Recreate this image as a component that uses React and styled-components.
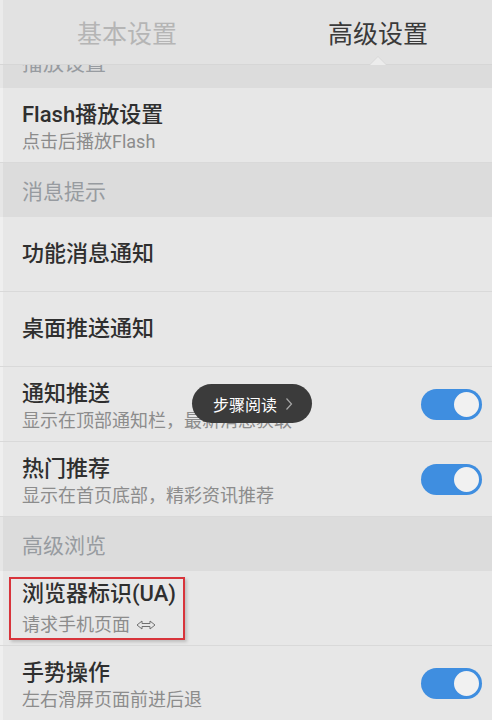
import React from 'react';
import styled, { createGlobalStyle } from 'styled-components';

const GlobalStyle = createGlobalStyle`
  html, body {
    margin: 0;
    padding: 0;
    background: #e8e8e8;
  }
  body {
    font-family: Roboto, "Noto Sans CJK SC", sans-serif;
  }
`;

const Screen = styled.div`
  position: relative;
  width: 492px;
  height: 720px;
  overflow: hidden;
  background: #e8e8e8;
  display: flex;
  flex-direction: column;
`;

const TabBar = styled.div`
  position: relative;
  z-index: 2;
  flex: none;
  height: 64px;
  display: grid;
  grid-template-columns: 254px 248px;
  background: #e2e2e2;
  border-bottom: 1px solid #d6d6d6;
  box-shadow: inset 3px 0 0 #ebebeb;
`;

const Tab = styled.div`
  position: relative;
  display: flex;
  align-items: center;
  justify-content: center;
  font-size: 25px;
  color: ${p => (p.active ? '#3a3a3a' : '#b5b5b5')};
`;

const Notch = styled.span`
  position: absolute;
  left: 50%;
  bottom: -1px;
  width: 0;
  height: 0;
  margin-left: -8px;
  border-left: 8px solid transparent;
  border-right: 8px solid transparent;
  border-bottom: 8px solid #ececec;
  filter: drop-shadow(0 -1px 0 #d8d8d8);
`;

const List = styled.div`
  flex: 1;
  overflow: hidden;
`;

const Scroller = styled.div`
  margin-top: -31px;
`;

const SectionHeader = styled.div`
  height: 54px;
  display: flex;
  align-items: center;
  padding-left: 22px;
  background: #dcdcdc;
  color: #979ba0;
  font-size: 21px;
  box-shadow: inset 3px 0 0 #e6e6e6;
`;

const Row = styled.div`
  height: 75px;
  box-sizing: border-box;
  display: flex;
  align-items: ${p => (p.sub ? 'flex-start' : 'center')};
  justify-content: space-between;
  padding: ${p => (p.sub ? '13px 10px 0 22px' : '0 10px 0 22px')};
  background: #e7e7e7;
  border-bottom: 1px solid #d9d9d9;
  box-shadow: inset 3px 0 0 #efefef;
`;

const TextBlock = styled.div`
  display: flex;
  flex-direction: column;
`;

const Title = styled.div`
  font-size: 22px;
  line-height: 28px;
  font-weight: 500;
  color: #2f2f2f;
  white-space: nowrap;
`;

const Subtitle = styled.div`
  font-size: 18px;
  line-height: 26px;
  color: #8c8c8c;
  white-space: nowrap;
  display: flex;
  align-items: center;
  gap: 6px;
`;

const Annotated = styled.div`
  display: flex;
  flex-direction: column;
  margin: 0 0 0 -13px;
  padding: 1px 7px 1px 11px;
  border: 2px solid #d8343b;
  box-shadow: 2px 2px 3px rgba(0, 0, 0, 0.18);
  ${Subtitle} {
    line-height: 24px;
    margin-top: 5px;
  }
`;

const Switch = styled.div`
  flex: none;
  align-self: center;
  width: 61px;
  height: 31px;
  border-radius: 16px;
  background: #3f8ee0;
  display: flex;
  justify-content: flex-end;
  align-items: center;
  box-sizing: border-box;
  padding-right: 1px;
  margin-top: ${p => (p.offset ? `-${p.offset}px` : '0')};
`;

const Knob = styled.div`
  width: 29px;
  height: 29px;
  border-radius: 50%;
  background: #f1f1f1;
  border: 2px solid #3f8ee0;
  box-sizing: border-box;
`;

const Toast = styled.div`
  position: absolute;
  left: 192px;
  top: 384px;
  z-index: 3;
  width: 120px;
  height: 39px;
  border-radius: 20px;
  background: #3b3b3b;
  display: flex;
  align-items: center;
  justify-content: center;
  gap: 8px;
  color: #ffffff;
  font-size: 16px;
  padding-left: 2px;
  box-sizing: border-box;
`;

const Swap = () => (
  <svg width="20" height="10" viewBox="0 0 20 10">
    <path
      d="M1 5 L6 1 L6 3.5 L14 3.5 L14 1 L19 5 L14 9 L14 6.5 L6 6.5 L6 9 Z"
      fill="none"
      stroke="#707070"
      strokeWidth="1"
      strokeLinejoin="round"
    />
  </svg>
);

const Chevron = () => (
  <svg width="8" height="14" viewBox="0 0 8 14">
    <polyline points="1.5,1.5 6.5,7 1.5,12.5" fill="none" stroke="#a8a8a8" strokeWidth="1.2" />
  </svg>
);

const Toggle = ({ offset }) => (
  <Switch offset={offset}>
    <Knob />
  </Switch>
);

const SettingRow = ({ title, sub, toggle }) => (
  <Row sub={sub}>
    <TextBlock>
      <Title>{title}</Title>
      {sub && <Subtitle>{sub}</Subtitle>}
    </TextBlock>
    {toggle && <Toggle offset={13} />}
  </Row>
);

export default function App() {
  return (
    <Screen>
      <GlobalStyle />
      <TabBar>
        <Tab>基本设置</Tab>
        <Tab active>
          高级设置
          <Notch />
        </Tab>
      </TabBar>

      <List>
        <Scroller>
          <SectionHeader>播放设置</SectionHeader>
          <SettingRow title="Flash播放设置" sub="点击后播放Flash" />

          <SectionHeader>消息提示</SectionHeader>
          <SettingRow title="功能消息通知" />
          <SettingRow title="桌面推送通知" />
          <SettingRow title="通知推送" sub="显示在顶部通知栏，最新消息获取" toggle />
          <SettingRow title="热门推荐" sub="显示在首页底部，精彩资讯推荐" toggle />

          <SectionHeader>高级浏览</SectionHeader>
          <Row>
            <Annotated>
              <Title>浏览器标识(UA)</Title>
              <Subtitle>
                请求手机页面 <Swap />
              </Subtitle>
            </Annotated>
          </Row>
          <SettingRow title="手势操作" sub="左右滑屏页面前进后退" toggle />
        </Scroller>
      </List>

      <Toast>
        步骤阅读
        <Chevron />
      </Toast>
    </Screen>
  );
}
